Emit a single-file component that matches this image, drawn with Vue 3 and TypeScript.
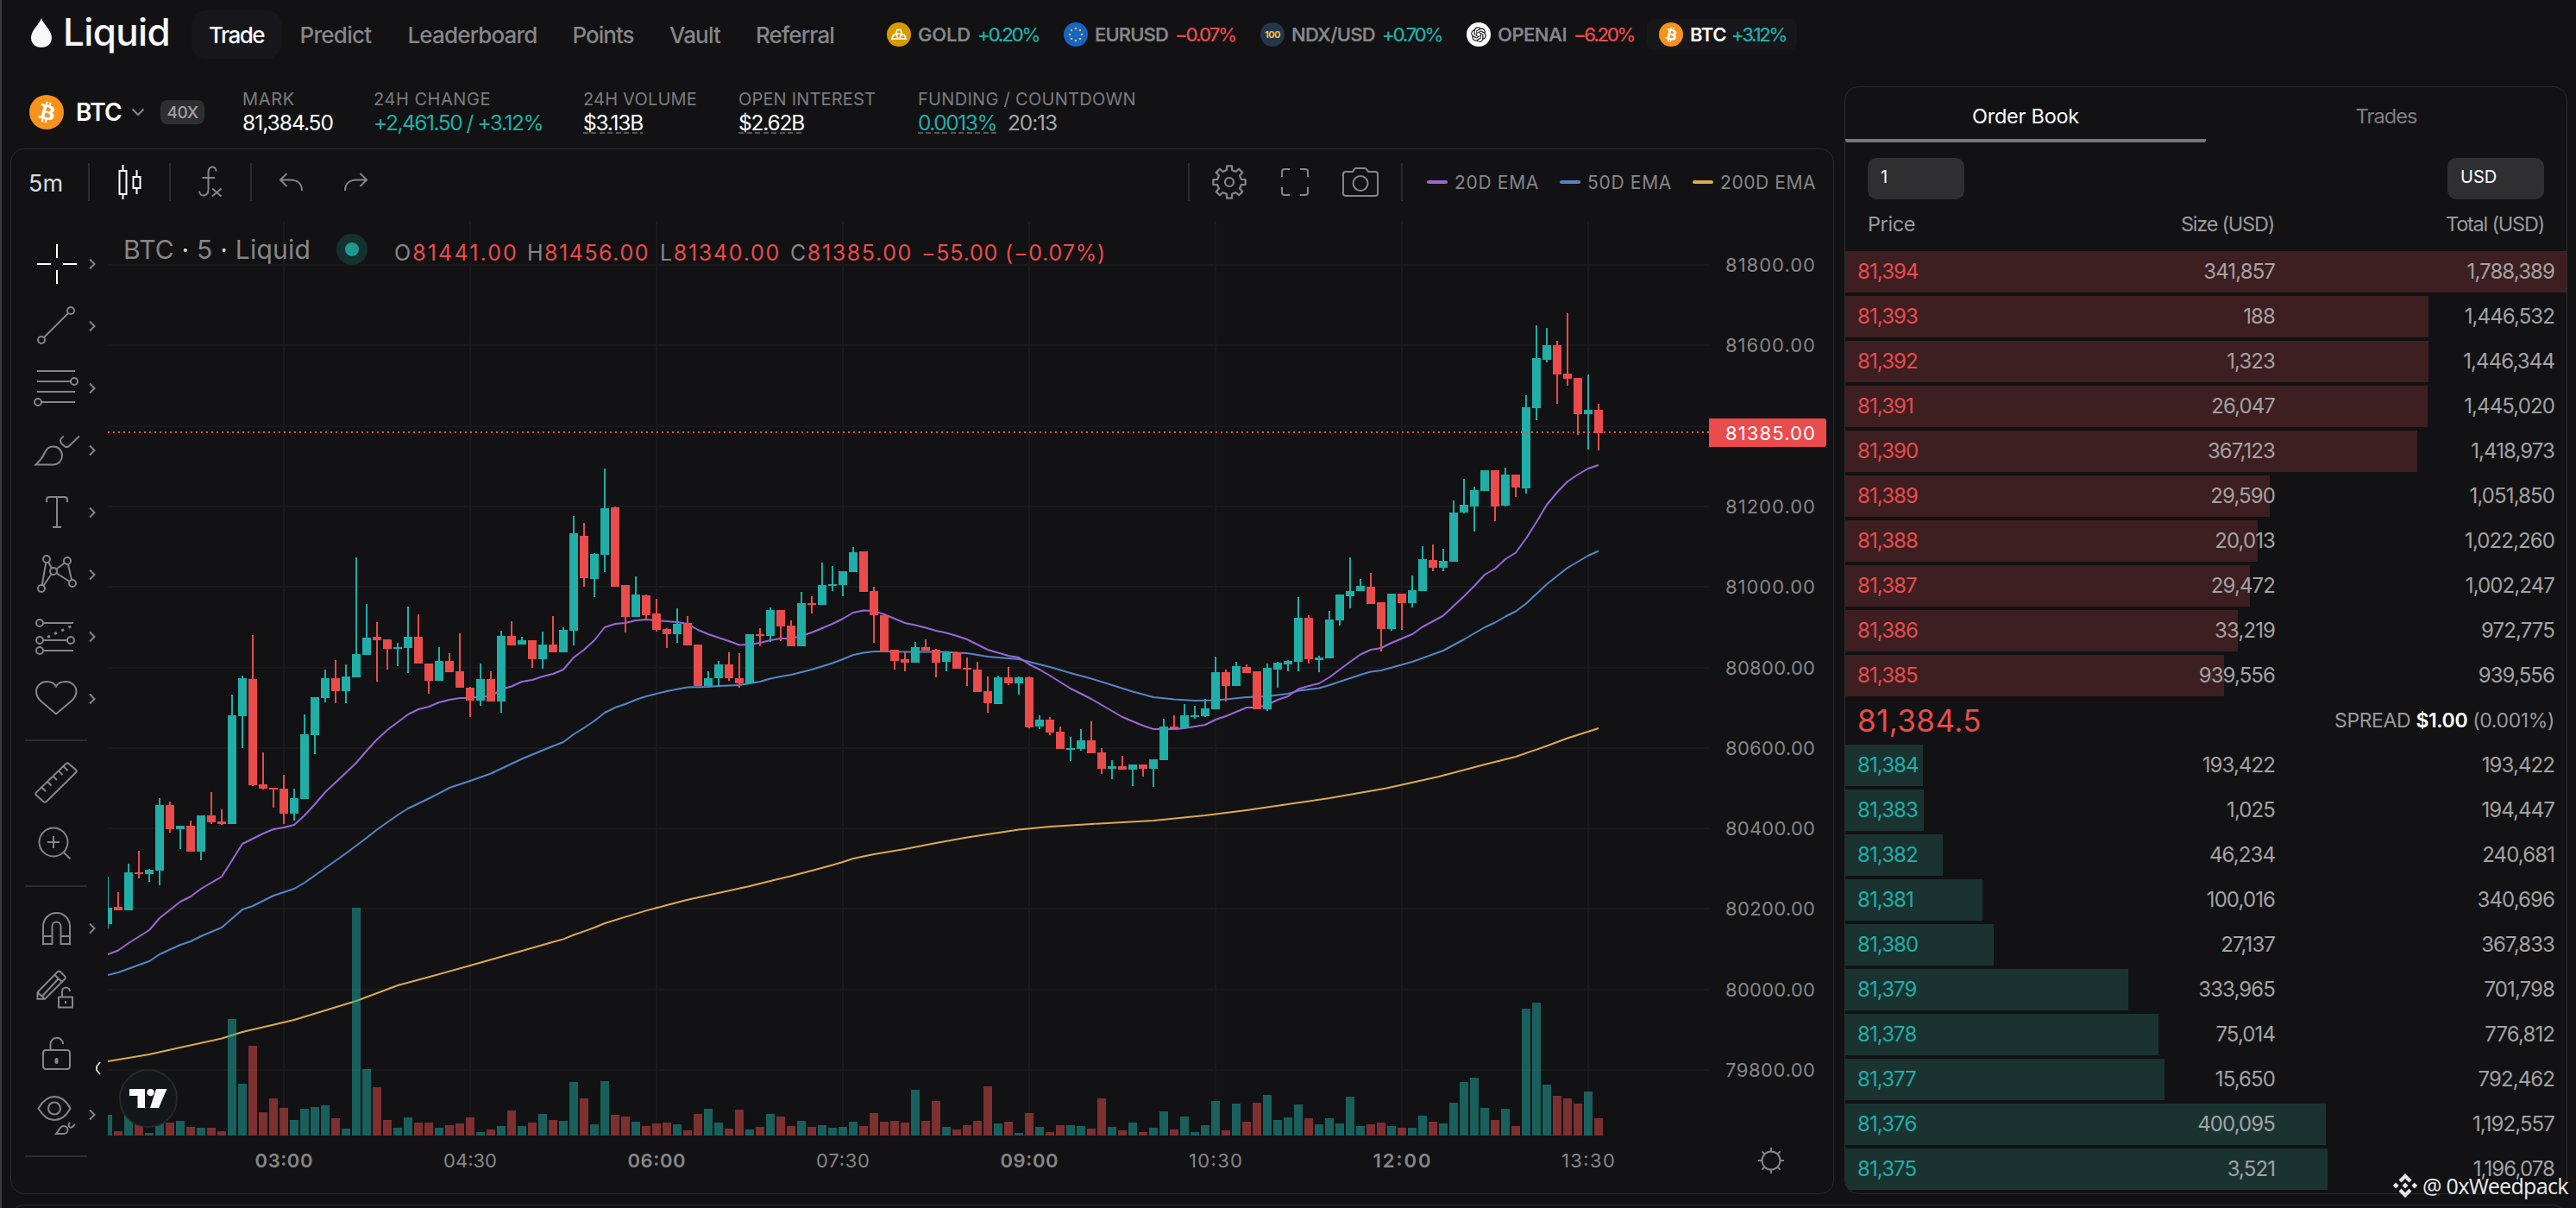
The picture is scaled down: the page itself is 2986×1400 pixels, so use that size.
<script setup lang="ts">
interface Candle {
  x: number
  up: boolean
  high: number
  top: number
  bottom: number
  low: number
  volume: number
}

/* Tracks a label out (or in) so that it fills a given width. */
const vFit = {
  mounted(el: HTMLElement, binding: { value: number }) {
    const count = (el.textContent ?? '').trim().length
    const natural = el.getBoundingClientRect().width
    if (count > 0) el.style.letterSpacing = `${((binding.value - natural) / count).toFixed(3)}px`
  },
}

const nav = [
  { label: 'Trade', w: 64, active: true },
  { label: 'Predict', w: 83 },
  { label: 'Leaderboard', w: 150 },
  { label: 'Points', w: 71 },
  { label: 'Vault', w: 59 },
  { label: 'Referral', w: 91 },
]

const tickers = [
  { icon: 'gold', name: 'GOLD', w: 61, change: '+0.20%', cw: 71, up: true },
  { icon: 'eur', name: 'EURUSD', w: 85, change: '−0.07%', cw: 70, up: false },
  { icon: 'ndx', name: 'NDX/USD', w: 97, change: '+0.70%', cw: 69, up: true },
  { icon: 'openai', name: 'OPENAI', w: 80, change: '−6.20%', cw: 70, up: false },
  { icon: 'btc', name: 'BTC', w: 42, change: '+3.12%', cw: 63, up: true, active: true },
]

const btcPath =
  'M23.189 14.02c.314-2.096-1.283-3.223-3.465-3.975l.708-2.84-1.728-.43-.69 2.765c-.454-.114-.92-.22-1.385-.326l.695-2.783L15.596 6l-.708 2.839c-.376-.086-.746-.17-1.104-.26l.002-.009-2.384-.595-.46 1.846s1.283.294 1.256.312c.7.175.826.638.805 1.006l-.806 3.235c.048.012.11.03.18.057l-.183-.045-1.13 4.532c-.086.212-.303.531-.793.41.018.025-1.256-.313-1.256-.313l-.858 1.978 2.25.561c.418.105.828.215 1.231.318l-.715 2.872 1.727.43.708-2.84c.472.127.93.245 1.378.357l-.706 2.828 1.728.43.715-2.866c2.948.558 5.164.333 6.097-2.333.752-2.146-.037-3.385-1.588-4.192 1.13-.26 1.98-1.003 2.207-2.538zm-3.95 5.538c-.533 2.147-4.148.986-5.32.695l.95-3.805c1.172.293 4.929.872 4.37 3.11zm.535-5.569c-.487 1.953-3.495.96-4.47.717l.86-3.45c.975.243 4.118.696 3.61 2.733z'
const openaiPath =
  'M22.2819 9.8211a5.9847 5.9847 0 0 0-.5157-4.9108 6.0462 6.0462 0 0 0-6.5098-2.9A6.0651 6.0651 0 0 0 4.9807 4.1818a5.9847 5.9847 0 0 0-3.9977 2.9 6.0462 6.0462 0 0 0 .7427 7.0966 5.98 5.98 0 0 0 .511 4.9107 6.051 6.051 0 0 0 6.5146 2.9001A5.9847 5.9847 0 0 0 13.2599 24a6.0557 6.0557 0 0 0 5.7718-4.2058 5.9894 5.9894 0 0 0 3.9977-2.9001 6.0557 6.0557 0 0 0-.7475-7.0729zm-9.022 12.6081a4.4755 4.4755 0 0 1-2.8764-1.0408l.1419-.0804 4.7783-2.7582a.7948.7948 0 0 0 .3927-.6813v-6.7369l2.02 1.1686a.071.071 0 0 1 .038.052v5.5826a4.504 4.504 0 0 1-4.4945 4.4944zm-9.6607-4.1254a4.4708 4.4708 0 0 1-.5346-3.0137l.142.0852 4.783 2.7582a.7712.7712 0 0 0 .7806 0l5.8428-3.3685v2.3324a.0804.0804 0 0 1-.0332.0615L9.74 19.9502a4.4992 4.4992 0 0 1-6.1408-1.6464zM2.3408 7.8956a4.485 4.485 0 0 1 2.3655-1.9728V11.6a.7664.7664 0 0 0 .3879.6765l5.8144 3.3543-2.0201 1.1685a.0757.0757 0 0 1-.071 0l-4.8303-2.7865A4.504 4.504 0 0 1 2.3408 7.872zm16.5963 3.8558L13.1038 8.364 15.1192 7.2a.0757.0757 0 0 1 .071 0l4.8303 2.7913a4.4944 4.4944 0 0 1-.6765 8.1042v-5.6772a.79.79 0 0 0-.407-.667zm2.0107-3.0231l-.142-.0852-4.7735-2.7818a.7759.7759 0 0 0-.7854 0L9.409 9.2297V6.8974a.0662.0662 0 0 1 .0284-.0615l4.8303-2.7866a4.4992 4.4992 0 0 1 6.6802 4.66zM8.3065 12.863l-2.02-1.1638a.0804.0804 0 0 1-.038-.0567V6.0742a4.4992 4.4992 0 0 1 7.3757-3.4537l-.142.0805L8.704 5.459a.7948.7948 0 0 0-.3927.6813zm1.0976-2.3654l2.602-1.4998 2.6069 1.4998v2.9994l-2.5974 1.4997-2.6067-1.4997Z'

const stars = Array.from({ length: 8 }, (_, i) => ({
  x: 14 + 7 * Math.cos((i * Math.PI) / 4),
  y: 14 + 7 * Math.sin((i * Math.PI) / 4),
}))

/* Outline of an eight-toothed cog in a 40px box. */
const gearPath = (() => {
  const parts: string[] = []
  const pt = (r: number, deg: number) => {
    const a = (deg * Math.PI) / 180
    return `${(20 + r * Math.cos(a)).toFixed(2)} ${(20 + r * Math.sin(a)).toFixed(2)}`
  }
  for (let i = 0; i < 8; i++) {
    const c = i * 45
    parts.push(`${i ? 'L' : 'M'}${pt(14.2, c - 13)}L${pt(18.9, c - 9)}L${pt(18.9, c + 9)}L${pt(14.2, c + 13)}`)
  }
  return parts.join('') + 'Z'
})()

const tools = [
  {
    name: 'cross', arrow: true, active: true,
    d: 'M5 28H21M35 28H51M28 5V21M28 35V51', dots: [],
  },
  { name: 'line', arrow: true, d: 'M13 41L41 13', dots: [[10, 44], [44, 10]] },
  { name: 'fib', arrow: true, d: 'M5 8H49M5 20H44M5 32H49M10 44H49', dots: [[48, 20], [6, 44]] },
  {
    name: 'brush', arrow: true,
    d: 'M3.5 44.4H24C30 44.4 34 39.5 34 34C34 28 29.5 23.6 24 23.6C19 23.6 16 26 14.2 30C11.500 36 8 40.500 3.500 44.400ZM54 11.5L42.500 22.500C40.500 24.600 38.200 24.600 36.200 22.700L33.500 20.100C31 17.700 31.500 14 36 11.500',
    dots: [],
  },
  { name: 'text', arrow: true, d: 'M16 16V13Q16 10 19 10H37Q40 10 40 13V16M28 10V45M23 45H33', dots: [] },
  {
    name: 'pattern', arrow: true,
    d: 'M16 10L10 44L24 24ZM24 24L40 12L46 38Z',
    dots: [[16, 10], [40, 12], [24, 24], [10, 44], [46, 38]],
  },
  {
    name: 'forecast', arrow: true,
    d: 'M12 12H47M12 32H40M12 44H47',
    dash: 'M17 28.5L46 15', dots: [[8, 12], [8, 32], [8, 44], [44, 32]],
  },
  {
    name: 'heart', arrow: true,
    d: 'M27 13.500C25 9.500 21 8 16.500 8C9.500 8 4 12.800 4 19.500C4 24 6 27.500 10 31L27 45.500L44 31C48 27.500 50.500 24 50.500 19.500C50.500 12.800 45 8 38 8C33 8 29 9.500 27 13.500Z',
    dots: [], end: true,
  },
  {
    name: 'ruler',
    d: 'M38.200 6.200Q40 4.600 41.800 6.200L50 13.200Q51.500 14.800 50 16.300L15.700 50Q14 51.500 12.300 50L4 42.500Q2.500 41 4 39.400ZM10.500 33.500L15 38M17 27L21.500 31.500M23.500 20.500L28 25M30 14.500L34.500 19M36 9.500L40.500 14',
    dots: [],
  },
  {
    name: 'zoom',
    d: 'M40.500 25A16.500 16.500 0 1 1 7.500 25A16.500 16.500 0 1 1 40.500 25ZM17 25H31M24 18V32M36 37L43.500 44.500',
    dots: [], end: true,
  },
  {
    name: 'magnet', arrow: true,
    d: 'M12 46V25.500a15.500 15.500 0 0 1 31 0V46H32.500V25.500a5 5 0 0 0-10 0V46ZM12 37H22.500M32.500 37H43',
    dots: [],
  },
  {
    name: 'pencil-lock',
    d: 'M5.500 30L28.500 6.500Q30.300 4.800 32.200 6.500L37 11.300Q38.500 13 37 14.700L14 37.800H5.500ZM5.500 30L14 37.800M25.500 10L34 18M11 34.500L29.500 14.500M30 35.500H46V47.500H30ZM34 35V29a4.500 4.500 0 0 1 9 0M38 40V43',
    dots: [],
  },
  {
    name: 'lock',
    d: 'M15 25H39.500Q43 25 43 28.500V43.500Q43 47 39.500 47H15.500Q12 47 12 43.500V28.500Q12 25 15 25ZM20.500 25V18a7.300 7.300 0 0 1 14.600 0',
    dots: [], hole: true,
  },
  {
    name: 'eye', arrow: true,
    d: 'M6.500 20.500C12 11 18 7 25 7S38.500 11 43.500 20.500C38.500 30 32 34 25 34S12 30 6.500 20.500ZM32 20.500A7 7 0 1 1 18 20.500A7 7 0 1 1 32 20.500ZM27 50H35.500C39 50 40.500 47.500 40.500 45.500C40.500 43 38.500 41 36 41C31 41 31 46 27 50ZM49 39L46 42Q44.500 43.500 42.500 42Q40.500 40 43 37',
    dots: [], end: true,
  },
] as {
  name: string; d: string; dots: number[][]
  arrow?: boolean; active?: boolean; dash?: string; end?: boolean; hole?: boolean
}[]

/* One candle per entry: direction, high, body top, body bottom, low, volume height. */
const series = `
u 1016 1052 1071 1076 24,d 1034 1051 1055 1055 5,u 1001 1011 1055 1055 25,d 986 1011 1013 1018 13,
u 1007 1008 1013 1022 3,u 925 933 1009 1026 15,d 929 933 961 965 15,u 957 957 961 984 17,
d 951 957 987 987 10,u 945 945 987 997 9,d 918 945 953 955 9,d 938 952 955 956 5,
u 805 829 955 955 135,u 783 786 830 867 60,d 736 787 910 911 104,d 872 909 914 915 27,
d 913 913 915 936 43,d 898 914 943 955 32,u 914 925 943 951 18,u 828 851 926 926 31,
u 808 808 852 874 33,u 776 786 809 814 35,d 765 786 801 815 20,u 770 784 801 815 8,
u 646 758 785 785 264,u 700 739 759 759 77,d 721 738 742 790 56,d 741 741 752 776 18,
u 745 750 752 772 9,u 703 738 751 780 21,d 712 738 769 769 15,d 769 769 789 804 15,
u 750 766 789 789 9,d 757 766 779 779 12,d 734 778 797 797 14,d 796 797 812 831 21,
u 769 787 812 818 4,d 778 787 813 813 7,u 731 737 813 826 11,d 720 737 748 748 29,
u 738 742 747 747 11,d 742 742 764 774 15,u 732 747 764 775 25,d 714 747 756 756 18,
u 727 730 756 756 17,u 598 618 731 748 62,d 606 621 670 680 43,u 641 642 671 692 13,
u 543 589 643 663 63,d 587 588 680 680 24,d 678 678 715 733 22,u 668 689 715 715 16,
d 689 690 713 717 11,d 694 711 730 732 14,d 728 729 735 751 15,u 705 723 735 745 13,
d 714 722 748 748 6,d 747 747 795 795 25,u 778 786 795 795 31,u 766 770 786 796 15,
d 756 770 786 789 8,d 757 786 792 797 30,u 735 735 792 792 7,d 728 735 737 749 10,
u 704 707 737 744 25,d 707 707 726 743 22,d 719 725 749 749 11,u 686 699 749 749 17,
d 691 699 701 711 10,u 652 678 701 701 12,u 656 677 679 685 9,u 662 662 678 691 10,
u 634 640 663 663 16,d 639 639 686 686 11,d 680 685 713 745 26,d 712 713 755 755 16,
d 753 753 766 776 17,d 756 764 768 778 15,u 744 750 768 768 53,d 741 750 754 754 17,
d 752 753 768 785 40,u 756 756 767 778 10,d 755 756 775 775 7,d 762 774 776 795 12,
d 767 776 802 802 17,d 784 801 815 826 57,u 783 785 816 816 14,d 773 785 792 794 16,
u 784 785 792 805 3,d 784 785 843 844 26,u 829 834 842 845 10,d 831 834 849 852 4,
d 842 848 868 868 12,u 854 867 868 882 12,u 845 858 868 870 11,d 836 858 873 873 8,
d 867 872 891 897 43,u 881 888 891 903 10,d 876 888 892 892 6,u 886 886 892 911 15,
d 886 886 891 900 4,u 880 880 891 912 9,u 833 842 881 881 28,d 829 842 844 845 7,
u 816 829 844 844 22,u 818 829 830 833 4,u 810 821 830 831 12,u 761 779 822 822 40,
d 776 779 795 813 6,u 767 772 795 795 37,d 770 773 780 780 16,d 778 778 822 822 38,
u 769 774 822 824 47,u 767 768 776 797 18,u 765 766 770 778 21,u 692 716 767 778 36,
d 713 716 764 769 20,u 760 762 765 779 13,u 708 718 763 763 20,u 689 689 719 725 14,
u 646 685 691 705 45,u 671 679 685 685 11,d 664 680 700 700 13,d 698 698 729 755 15,
u 688 688 729 731 11,d 688 688 699 730 9,u 667 684 699 704 9,u 633 648 685 685 23,
d 631 649 658 662 16,u 636 650 658 662 14,u 580 594 651 651 38,u 555 585 594 595 62,
u 564 568 587 616 67,u 545 545 569 569 32,d 545 545 587 604 18,u 542 550 586 587 31,
d 550 550 565 576 11,u 458 472 566 572 147,u 377 415 473 487 154,u 380 400 417 420 59,
d 395 400 434 468 46,d 363 433 439 447 43,d 438 438 480 504 37,u 434 475 480 521 51,
d 468 475 502 522 20`

const candles: Candle[] = series
  .split(',')
  .map((entry, i) => {
    const [dir, ...n] = entry.trim().split(' ')
    const [high, top, bottom, low, volume] = n.map(Number)
    return { x: 125 + i * 12, up: dir === 'u', high, top, bottom, low, volume }
  })

const ema20 =
  '125,1106 137,1101.5 149,1093 173,1078 185,1064 209,1045 221,1039 233,1030 257,1016 281,978 293,972 305,966 317,961 329,959 341,956 353,945 365,932 377,918 401,895.5 413,884 425,870 437,857 449,846 461,837 473,828 485,822 497,819 509,814 521,811 533,809 545,809 557,807 569,807 581,799 593,795.5 605,790 617,788 629,784 641,781 653,776 665,762 677,753 689,742 701,727 713,723 725,722 737,719 749,718 761,719 773,720 785,721 797,723 809,730 821,735 833,739 845,743 857,747.500 869,747 881,745 893,742 905,740 917,740 929,737 941,733 953,728 965,723 977,717 989,710 1001,707.500 1013,708 1025,712 1037,717 1049,722 1061,724.500 1073,727.500 1085,731 1097,733.500 1109,737 1121,741 1133,747 1145,753 1169,760 1181,762 1193,770 1205,776 1217,783 1241,798 1265,810 1277,817 1289,824 1301,831 1325,841 1337,845 1361,845 1373,844 1397,840 1409,834 1421,830 1433,825 1445,820 1457,820 1469,817 1481,811 1493,807 1505,798.500 1517,795 1529,792 1541,785 1553,776 1565,767 1577,758.500 1589,753 1601,751 1613,745 1637,735 1649,726.500 1673,713.500 1697,691 1709,679 1721,666 1733,659 1745,648 1757,640.500 1769,624 1781,605 1793,585 1805,570.500 1817,558 1829,550 1841,543 1853,539'
const ema50 =
  '125,1130 137,1127 173,1114 185,1106 209,1095 221,1091 233,1085 257,1075 281,1054 293,1050 317,1038 341,1030 353,1023 377,1006 401,989 425,971 437,961.500 461,944.500 473,937 500,924 521,913 545,905 569,896.500 605,879.500 640,865 653,860 665,851 677,843.500 689,835.500 701,826 713,820 725,816 737,811 749,807 773,801 797,796.500 821,796 833,795 857,794 881,790 893,786.500 905,784 917,782 941,776 965,768.500 977,764 989,759 1001,756.500 1013,755 1025,755 1049,755.500 1097,755.500 1109,756.500 1121,757 1145,761 1181,764 1193,767 1217,773 1241,780 1265,786.500 1289,794 1313,801.500 1337,808 1361,810.500 1385,812 1409,811.500 1421,810.500 1445,808 1469,807 1493,804 1505,800.500 1529,797.500 1541,794 1577,782 1589,778.500 1601,777 1637,767 1673,754 1697,741 1721,727 1733,721.500 1745,714.500 1757,708.500 1769,699.500 1793,677 1817,658 1841,644 1853,638.500'
const ema200 =
  '125,1230 173,1222 209,1214 257,1203.500 281,1196 341,1182 377,1171 413,1160 461,1142 500,1131.500 545,1119 605,1102 640,1092 653,1088.400 665,1083.500 677,1079.400 689,1075 701,1070 725,1062.600 749,1055.400 773,1049 797,1042.700 821,1037.600 845,1032.300 869,1027 893,1021 917,1015.300 941,1009 965,1002.500 977,999 989,995 1013,990 1049,984 1085,977 1121,970.500 1181,961.500 1217,958 1265,955 1337,951 1397,945 1445,939 1493,932 1541,925 1607,913.500 1668,900 1721,886 1757,877 1793,864.500 1817,855.500 1853,844'

const priceLabels = [81800, 81600, 0, 81200, 81000, 80800, 80600, 80400, 80200, 80000, 79800].map((p, i) => ({
  text: p ? p.toFixed(2) : '',
  y: 307 + i * 93.3,
}))
const timeLabels = ['03:00', '04:30', '06:00', '07:30', '09:00', '10:30', '12:00', '13:30'].map((text, i) => ({
  text,
  x: 329 + i * 216,
  strong: i % 2 === 0,
}))

const ohlc = [
  { k: 'O', v: '81441.00', w: 144, gap: 10 },
  { k: 'H', v: '81456.00', w: 142, gap: 12 },
  { k: 'L', v: '81340.00', w: 140, gap: 11 },
  { k: 'C', v: '81385.00', w: 142, gap: 10 },
]

const emas = [
  { label: '20D EMA', w: 98, cls: 'purple' },
  { label: '50D EMA', w: 98, cls: 'blue' },
  { label: '200D EMA', w: 111, cls: 'amber' },
]

const asks: [number, number, number][] = [
  [81394, 341857, 1788389], [81393, 188, 1446532], [81392, 1323, 1446344], [81391, 26047, 1445020],
  [81390, 367123, 1418973], [81389, 29590, 1051850], [81388, 20013, 1022260], [81387, 29472, 1002247],
  [81386, 33219, 972775], [81385, 939556, 939556],
]
const bids: [number, number, number][] = [
  [81384, 193422, 193422], [81383, 1025, 194447], [81382, 46234, 240681], [81381, 100016, 340696],
  [81380, 27137, 367833], [81379, 333965, 701798], [81378, 75014, 776812], [81377, 15650, 792462],
  [81376, 400095, 1192557], [81375, 3521, 1196078],
]
const fmt = (n: number) => n.toLocaleString('en-US')
const depth = (total: number) => ({ width: `${((total / 1788389) * 100).toFixed(3)}%` })
</script>

<template>
  <div class="app">
    <header class="top">
      <div class="brand">
        <svg width="26" height="34" viewBox="0 0 26 34"><path d="M13 0C15 7 25 14 25 22.500C25 29.500 20 34 13 34S1 29.500 1 22.500C1 14 11 7 13 0Z" fill="#f8f8fa" /></svg>
        <span v-fit="124" class="brand-name">Liquid</span>
      </div>
      <nav class="nav">
        <a v-for="n in nav" :key="n.label" :class="{ active: n.active }"><span v-fit="n.w">{{ n.label }}</span></a>
      </nav>
      <div class="tickers">
        <div v-for="t in tickers" :key="t.name" class="ticker" :class="{ active: t.active }">
          <svg width="28" height="28" viewBox="0 0 28 28">
            <template v-if="t.icon === 'gold'">
              <circle cx="14" cy="14" r="14" fill="#d99a00" />
              <path d="M12 8.500H16L17.500 13H10.500ZM7.500 14.500H11.500L13 19H6ZM16.500 14.500H20.500L22 19H15Z" fill="none" stroke="#fff" stroke-width="1.600" />
            </template>
            <template v-else-if="t.icon === 'eur'">
              <circle cx="14" cy="14" r="14" fill="#1565c6" />
              <circle v-for="(s, i) in stars" :key="i" :cx="s.x" :cy="s.y" r="1.300" fill="#f0b840" />
            </template>
            <template v-else-if="t.icon === 'ndx'">
              <circle cx="14" cy="14" r="14" fill="#23364c" />
              <text x="14" y="18.300" text-anchor="middle" class="ndx">100</text>
            </template>
            <template v-else-if="t.icon === 'openai'">
              <circle cx="14" cy="14" r="14" fill="#fff" />
              <path :d="openaiPath" transform="translate(5.200 5.200) scale(.735)" fill="#111" />
            </template>
            <template v-else>
              <circle cx="14" cy="14" r="14" fill="#f7931a" />
              <path :d="btcPath" transform="scale(.875)" fill="#fff" />
            </template>
          </svg>
          <span v-fit="t.w" class="t-name">{{ t.name }}</span>
          <span v-fit="t.cw" :class="t.up ? 'up' : 'down'">{{ t.change }}</span>
        </div>
      </div>
    </header>

    <main class="main">
      <section class="left">
        <div class="stats">
          <div class="pair">
            <svg width="40" height="40" viewBox="0 0 32 32"><circle cx="16" cy="16" r="16" fill="#f7931a" /><path :d="btcPath" fill="#fff" /></svg>
            <b v-fit="53">BTC</b>
            <svg class="chev" width="16" height="10" viewBox="0 0 16 10"><path d="M1.500 1.500L8 8L14.500 1.500" /></svg>
            <span class="lev"><span v-fit="36">40X</span></span>
          </div>
          <div class="stat s1"><label v-fit="61">MARK</label><p><span v-fit="105">81,384.50</span></p></div>
          <div class="stat s2"><label v-fit="136">24H CHANGE</label><p class="up"><span v-fit="196">+2,461.50 / +3.12%</span></p></div>
          <div class="stat s3"><label v-fit="132">24H VOLUME</label><p><span v-fit="69" class="dash">$3.13B</span></p></div>
          <div class="stat s4"><label v-fit="159">OPEN INTEREST</label><p><span v-fit="76" class="dash">$2.62B</span></p></div>
          <div class="stat s5"><label v-fit="253">FUNDING / COUNTDOWN</label><p><span v-fit="91" class="dash up">0.0013%</span><span v-fit="57" class="count">20:13</span></p></div>
        </div>

        <div class="chart-panel">
          <div class="toolbar">
            <span v-fit="41" class="interval">5m</span>
            <i class="vr" />
            <svg class="ico white" width="40" height="44" viewBox="130.500 189 40 44"><path d="M139 198H147V225H139ZM143 191V198M143 225V231M155 205H163V218H155ZM159 197V205M159 218V225" /></svg>
            <i class="vr" />
            <svg class="ico" width="40" height="44" viewBox="224 189 40 44"><path d="M250.500 198.500C250.500 191.500 241.500 191.500 241.500 200V219.500C241.500 228.500 231.500 228.500 231 221.500M234.500 206H249M246 218.500L256.500 227.500M256.500 218.500L246 227.500" /></svg>
            <i class="vr" />
            <svg class="ico undo" width="30" height="24" viewBox="322 199 30 24"><path d="M332.500 201L325 208.500L332.500 216M325 208.500H337C345 208.500 350 213 350 221" /></svg>
            <svg class="ico redo" width="30" height="24" viewBox="398 199 30 24"><path d="M417.500 201L425 208.500L417.500 216M425 208.500H413C405 208.500 400 213 400 221" /></svg>
            <div class="tb-right">
              <i class="vr" />
              <svg class="ico gear" width="42" height="42" viewBox="-1 -1 42 42"><path :d="gearPath" stroke-linejoin="round" /><circle cx="20" cy="20" r="5" /></svg>
              <svg class="ico full" width="34" height="34" viewBox="0 0 34 34"><path d="M2 11V5Q2 2 5 2H11M23 2H29Q32 2 32 5V11M32 23V29Q32 32 29 32H23M11 32H5Q2 32 2 29V23" /></svg>
              <svg class="ico cam" width="44" height="36" viewBox="0 0 44 36"><path d="M5 6H13L15.500 2.500Q16 2 17 2H27Q28 2 28.500 2.500L31 6H39Q42 6 42 9V31Q42 34 39 34H5Q2 34 2 31V9Q2 6 5 6Z" /><circle cx="22" cy="19.500" r="8.500" /></svg>
              <i class="vr" />
              <div class="emas">
                <span v-for="e in emas" :key="e.label" class="ema"><i :class="e.cls" /><span v-fit="e.w">{{ e.label }}</span></span>
              </div>
            </div>
          </div>

          <div class="stage">
            <aside class="side">
              <div v-for="t in tools" :key="t.name" class="tool" :class="{ active: t.active, end: t.end }">
                <svg width="56" height="56" viewBox="0 0 56 56">
                  <path :d="t.d" />
                  <path v-if="t.dash" :d="t.dash" stroke-width="3" stroke-dasharray="3 6" />
                  <circle v-for="(c, i) in t.dots" :key="i" :cx="c[0]" :cy="c[1]" r="4" class="node" />
                  <rect v-if="t.hole" x="25.500" y="34" width="4" height="7" rx="2" class="hole" />
                </svg>
                <svg v-if="t.arrow" class="arrow" width="8" height="14" viewBox="0 0 8 14"><path d="M1 1.500L6.500 7L1 12.500" /></svg>
              </div>
            </aside>

            <div class="canvas">
              <svg class="plot" width="2000" height="1126" viewBox="125 257 2000 1126">
                <defs><clipPath id="pane"><rect x="125" y="257" width="1856" height="1060" /></clipPath></defs>
                <g class="grid">
                  <rect v-for="p in priceLabels" :key="'h' + p.y" x="125" :y="Math.round(p.y) - 1" width="1856" height="2" />
                  <rect v-for="t in timeLabels" :key="'v' + t.x" :x="t.x - 1" y="257" width="2" height="1060" />
                </g>
                <g clip-path="url(#pane)">
                  <polyline :points="ema200" class="line amber" />
                  <polyline :points="ema50" class="line blue" />
                  <polyline :points="ema20" class="line purple" />
                  <rect v-for="c in candles" :key="'b' + c.x" :x="c.x - 5" :y="1316 - c.volume" width="10" :height="c.volume" :class="c.up ? 'cu' : 'cd'" opacity=".5" />
                  <g v-for="c in candles" :key="'c' + c.x" :class="c.up ? 'cu' : 'cd'">
                    <rect :x="c.x - 1" :y="c.high" width="2" :height="c.low - c.high" />
                    <rect :x="c.x - 5" :y="c.top" width="10" :height="Math.max(2, c.bottom - c.top)" />
                  </g>
                </g>
                <line x1="125" y1="501" x2="1981" y2="501" class="last" />
                <text v-for="p in priceLabels" :key="'p' + p.y" x="2000" :y="p.y + 8" class="axis" :textLength="p.text ? 104 : undefined">{{ p.text }}</text>
                <path d="M1981 485H2114Q2117 485 2117 488V515Q2117 518 2114 518H1981Z" fill="#ea4b4b" />
                <text x="2000" y="509.500" class="axis now" textLength="104">81385.00</text>
                <text v-for="t in timeLabels" :key="t.text" :x="t.x" y="1353" text-anchor="middle" class="axis" :class="{ strong: t.strong }" :textLength="t.strong ? 67 : 62">{{ t.text }}</text>
                <g class="sun" transform="translate(2053 1345)">
                  <circle r="10.500" />
                  <path v-for="a in 8" :key="a" d="M0 -10.500V-15" :transform="`rotate(${a * 45})`" />
                </g>
              </svg>
              <div class="legend">
                <span v-fit="217" class="sym">BTC <b>·</b> 5 <b>·</b> Liquid</span>
                <span class="status"><i /></span>
                <div class="ohlc">
                  <span v-for="o in ohlc" :key="o.k" v-fit="o.w" :style="{ marginRight: o.gap + 'px' }"><em>{{ o.k }}</em>{{ o.v }}</span>
                  <span v-fit="214">−55.00 (−0.07%)</span>
                </div>
              </div>
              <svg class="collapse" width="8" height="16" viewBox="0 0 8 16"><path d="M6 1L2 6V10L6 15" /></svg>
              <div class="tv">
                <svg width="44" height="22" viewBox="0 0 44 22"><path d="M0 0H18V22H9.500V8H0ZM31 0H43.500L34 22H24Z" fill="#f8f8fa" /><circle cx="24.500" cy="4" r="4.200" fill="#f8f8fa" /></svg>
              </div>
            </div>
          </div>
        </div>
      </section>

      <section class="book">
        <div class="tabs">
          <div class="tab on"><span v-fit="124">Order Book</span></div>
          <div class="tab"><span v-fit="71">Trades</span></div>
        </div>
        <div class="selects"><span>1</span><span class="usd">USD</span></div>
        <div class="cols">
          <div class="c-price"><span v-fit="55">Price</span></div>
          <div class="c-size"><span v-fit="108">Size (USD)</span></div>
          <div class="c-total"><span v-fit="114">Total (USD)</span></div>
        </div>
        <div class="rows">
          <div v-for="r in asks" :key="r[0]" class="row ask">
            <i class="bar" :style="depth(r[2])" />
            <span class="price">{{ fmt(r[0]) }}</span><span class="size">{{ fmt(r[1]) }}</span><span class="total">{{ fmt(r[2]) }}</span>
          </div>
          <div class="mid">
            <strong v-fit="144">81,384.5</strong>
            <span v-fit="255" class="spread">SPREAD <b>$1.00</b> (0.001%)</span>
          </div>
          <div v-for="r in bids" :key="r[0]" class="row bid">
            <i class="bar" :style="depth(r[2])" />
            <span class="price">{{ fmt(r[0]) }}</span><span class="size">{{ fmt(r[1]) }}</span><span class="total">{{ fmt(r[2]) }}</span>
          </div>
        </div>
      </section>
    </main>

    <footer class="next-panel" />

    <div class="mark">
      <svg width="28" height="28" viewBox="0 0 28 28"><path d="M14 0L21.500 7.500L18.500 10.500L14 6L9.500 10.500L6.500 7.500ZM3.200 10.500L6.700 14L3.200 17.500L-.300 14ZM14 10.500L17.500 14L14 17.500L10.500 14ZM24.800 10.500L28.300 14L24.800 17.500L21.300 14ZM6.500 20.500L9.500 17.500L14 22L18.500 17.500L21.500 20.500L14 28Z" fill="#e6e6e6" /></svg>
      <span v-fit="169">@ 0xWeedpack</span>
    </div>
  </div>
</template>

<style>
html,
body {
  background: #121214;
}
</style>

<style scoped>
.app {
  position: relative;
  box-sizing: border-box;
  width: 2986px;
  height: 1400px;
  overflow: hidden;
  border-left: 2px solid #3c3c3f;
  background: #121214;
  color: #8a8a8a;
  font-family: Inter, 'Liberation Sans', sans-serif;
  display: flex;
  flex-direction: column;
}
span, b, strong, label { white-space: nowrap; }
i { display: block; }
.up { color: #20aea6; }
.down { color: #ea4b4b; }

.top { height: 80px; flex: none; display: flex; align-items: center; }
.brand { width: 220px; padding-left: 33px; box-sizing: border-box; display: flex; align-items: center; gap: 12px; height: 72px; }
.brand svg { margin-top: -4px; }
.brand-name { color: #f8f8fa; font-size: 44px; font-weight: 500; line-height: 72px; position: relative; top: -3px; }
.nav { display: grid; grid-template-columns: 104px 126px 191px 112px 101px 131px; height: 56px; }
.nav a { display: flex; align-items: center; justify-content: center; font-size: 26px; border-radius: 16px; font-weight: 450; color: #868688; }
.nav a.active { background: #17171b; color: #fff; font-weight: 500; }
.tickers { display: flex; margin-left: 27px; gap: 2px; }
.ticker { display: flex; align-items: center; height: 36px; padding: 0 13px 0 14px; border-radius: 8px; font-size: 22px; font-weight: 500; }
.ticker svg { margin-right: 8px; flex: none; }
.ticker .t-name { margin-right: 8px; font-weight: 600; color: #868688; }
.ticker.active { background: #17171b; }
.ticker.active .t-name { color: #fff; margin-right: 6px; }
.ndx { font: 700 11px Inter, sans-serif; fill: #f5c242; letter-spacing: -.5px; }

.main { display: flex; height: 1304px; flex: none; }
.left { width: 2114px; margin-left: 10px; display: flex; flex-direction: column; }
.stats { height: 92px; display: flex; align-items: flex-start; }
.pair { display: flex; align-items: center; width: 269px; height: 100px; padding-left: 22px; box-sizing: border-box; }
.pair b { color: #fff; font-size: 28px; font-weight: 600; margin-left: 14px; }
.chev { margin-left: 11px; fill: none; stroke: #868688; stroke-width: 2; }
.lev { margin-left: 18px; width: 51px; height: 28px; border-radius: 8px; background: #2f2f31; color: #a2a2a4; font-size: 19px; font-weight: 500; display: flex; align-items: center; justify-content: center; }
.stat { display: flex; flex-direction: column; align-items: flex-start; padding-top: 22px; }
.stat label { font-size: 20px; line-height: 26px; color: #7c7c7e; }
.stat p { margin: 0; font-size: 24.500px; line-height: 29px; color: #fff; display: flex; gap: 13px; }
.stat p.up, .stat .up { color: #20aea6; }
.stat .count { color: #a6a6a8; }
.s1 { width: 152px; }
.s2 { width: 243px; }
.s3 { width: 180px; }
.s4 { width: 208px; }
.dash { height: 27px; background: repeating-linear-gradient(90deg, #58585a 0 6px, transparent 6px 9.500px) left bottom / 100% 2px no-repeat; }

.chart-panel { height: 1212px; box-sizing: border-box; border: 1px solid #2b2b2e; border-radius: 16px; overflow: hidden; }
.toolbar { height: 76px; display: flex; align-items: center; padding-bottom: 8px; }
.vr { width: 2px; height: 44px; background: #2c2c2f; flex: none; }
.interval { color: #dcdcde; font-size: 27px; width: 40px; margin: 2px 28px 0 20px; padding-right: 1px; }
.ico { fill: none; stroke: #868688; stroke-width: 2; flex: none; margin: 0 26px; }
.ico.white { stroke: #fff; }
.ico.undo { margin: 0 0 0 30px; }
.ico.redo { margin: 0 0 0 46px; }
.tb-right { margin-left: auto; display: flex; align-items: center; }
.ico.gear { margin: 0 0 0 25px; stroke-width: 2.200; }
.ico.full { margin: 0 0 0 38px; }
.ico.cam { margin: -1px 25px 0 37px; }
.emas { display: flex; width: 499px; }
.ema { display: flex; align-items: center; font-size: 21px; color: #868688; }
.ema i { width: 24px; height: 4px; border-radius: 2px; margin: 0 8px 0 28px; }
.ema + .ema i { margin-left: 24px; }
i.purple { background: #9a66d8; }
i.blue { background: #5585c8; }
i.amber { background: #dcaa50; }

.stage { display: flex; height: 1126px; }
.side { width: 112px; flex: none; padding-top: 13px; }
.tool { height: 72px; display: flex; align-items: center; padding-left: 25px; margin-right: 4px; }
.tool svg { fill: none; stroke: #868688; stroke-width: 2; flex: none; }
.tool.active svg:first-child { stroke: #fff; }
.tool .arrow { margin-left: 9px; }
.tool.end { position: relative; margin-bottom: 25px; }
.tool.end::after { content: ''; position: absolute; left: 16px; width: 72px; height: 2px; bottom: -13px; background: #2c2c2f; }
.node { fill: #121214; }
.tool .hole { fill: #868688; stroke: none; }
.canvas { position: relative; width: 2000px; }
.plot { display: block; }
.grid rect { fill: #1a1a1c; }
.line { fill: none; stroke-width: 2; stroke-linejoin: round; }
.line.purple { stroke: #9a66d8; }
.line.blue { stroke: #5585c8; }
.line.amber { stroke: #dcaa50; }
.cu { fill: #20aea6; }
.cd { fill: #ea4b4b; }
.last { stroke: #ea4b4b; stroke-width: 2; stroke-dasharray: 2 4; }
.axis { font: 400 22px Inter, sans-serif; fill: #868688; }
.axis.strong { font-weight: 600; }
.axis.now { fill: #fff; }
.sun { fill: none; stroke: #868688; stroke-width: 2; }
.legend { position: absolute; left: 18px; top: 12px; display: flex; align-items: center; height: 40px; }
.sym { font-size: 30px; color: #868688; }
.sym b { color: #d8d8da; font-weight: 400; }
.status { margin-left: 30px; width: 36px; height: 36px; border-radius: 50%; background: #14302f; display: flex; align-items: center; justify-content: center; }
.status i { width: 16px; height: 16px; border-radius: 50%; background: #20988f; }
.ohlc { display: flex; margin: 7px 0 0 31px; font-size: 25px; color: #ea4b4b; }
.ohlc em { font-style: normal; color: #868688; }
.collapse { position: absolute; left: -15px; top: 973px; fill: none; stroke: #d0d0d2; stroke-width: 2; }
.tv { position: absolute; left: 13px; top: 982px; width: 64px; height: 64px; border: 2px solid #26282b; border-radius: 50%; background: #141719; display: flex; align-items: center; justify-content: center; }

.book { width: 838px; height: 1284px; margin: 20px 0 0 12px; box-sizing: border-box; border: 1px solid #2b2b2e; border-radius: 16px; overflow: hidden; }
.tabs { display: flex; height: 65px; }
.tab { flex: 1; display: flex; justify-content: center; align-items: center; font-size: 23.500px; color: #7e7e80; border-bottom: 4px solid transparent; padding-top: 7px; box-sizing: border-box; height: 64px; }
.tab.on { color: #fff; border-bottom-color: #77777a; border-radius: 2px; }
.selects { display: flex; justify-content: space-between; padding: 17px 26px 0 26px; }
.selects span { width: 112px; height: 48px; box-sizing: border-box; padding: 0 0 4px 15px; border-radius: 10px; background: #2f2f31; color: #fff; font-size: 20px; line-height: 45px; }
.cols { display: flex; padding: 0 26px; height: 60px; line-height: 57px; font-size: 23.500px; color: #9a9a9c; }
.c-price { width: 235px; }
.c-size { width: 236px; text-align: right; }
.c-total { flex: 1; text-align: right; }
.row { position: relative; height: 48px; margin-bottom: 4px; display: flex; align-items: center; padding: 0 14px; font-size: 24px; letter-spacing: -.9px; color: #a2a2a4; }
.row span { position: relative; top: -1px; }
.bar { position: absolute; left: 0; top: 0; height: 48px; }
.ask .bar { background: #3d1e21; }
.bid .bar { background: #1a3331; }
.price { width: 240px; }
.ask .price { color: #ea4b4b; }
.bid .price { color: #20aea6; }
.size { width: 244px; text-align: right; }
.total { flex: 1; text-align: right; }
.mid { height: 52px; display: flex; align-items: center; justify-content: space-between; padding: 0 14px 4px; box-sizing: border-box; }
.mid strong { font-size: 35px; font-weight: 400; color: #ea4b4b; line-height: 48px; }
.spread { font-size: 23px; color: #9a9a9c; }
.spread b { color: #fff; font-weight: 600; }
.next-panel { height: 40px; margin: 12px 11px 0 10px; border: 1px solid #2b2b2e; border-radius: 16px; flex: none; }
.mark { position: absolute; left: 2772px; top: 1358px; display: flex; align-items: center; gap: 6px; color: #e6e6e6; font: 25px/32px 'Noto Sans', 'Open Sans', sans-serif; text-shadow: 0 0 2px #000; }
</style>
